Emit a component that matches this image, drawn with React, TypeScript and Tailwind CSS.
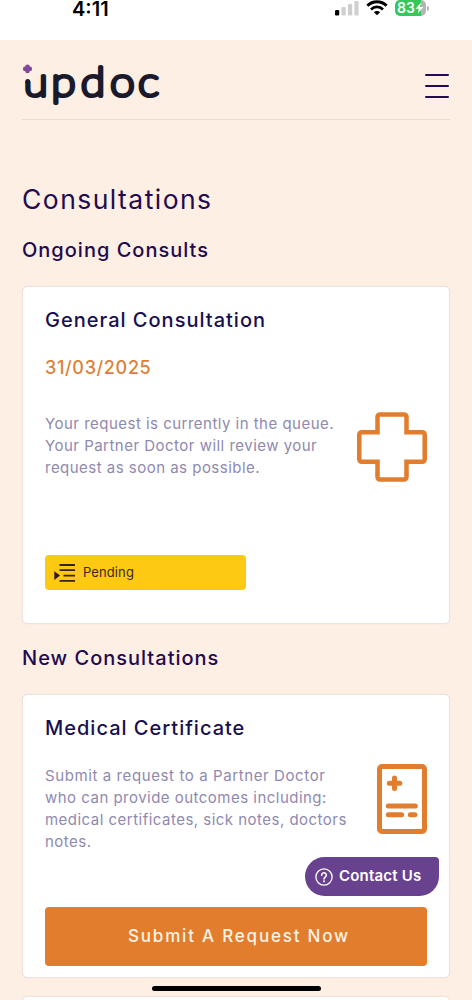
import type { ReactNode } from 'react';
import { clsx } from 'clsx';

function StatusBar() {
  return (
    <div className="relative flex h-10 shrink-0 justify-between bg-white pr-[43px] pl-[72px] text-black">
      <span className="h-[18px] text-[20px] leading-[18px] font-semibold">4:11</span>
      <div className="flex h-4 items-start">
        <svg width="24" height="16" viewBox="0 0 24 16">
          <rect x="0" y="10" width="4.2" height="5.5" rx="1.2" fill="#000" />
          <rect x="6.5" y="7" width="4.2" height="8.5" rx="1.2" fill="#cfcfcf" />
          <rect x="13" y="4" width="4.2" height="11.5" rx="1.2" fill="#cfcfcf" />
          <rect x="19.4" y="1" width="4.2" height="14.5" rx="1.2" fill="#cfcfcf" />
        </svg>
        <svg className="ml-[7px]" width="22" height="16" viewBox="0 0 22 16" fill="none" stroke="#000">
          <path d="M1.4 5.7a13.6 13.6 0 0 1 19.2 0" strokeWidth="3" />
          <path d="M5 9.4a8.5 8.5 0 0 1 12 0" strokeWidth="2.8" />
          <path d="M11 15.3l-3.1-3.1a4.4 4.4 0 0 1 6.2 0z" fill="#000" stroke="none" />
        </svg>
        <div className="relative ml-[7px] flex h-4 w-[31px] items-center overflow-hidden rounded-[5px] bg-[linear-gradient(90deg,#34c759_83%,#b5b5b5_83%)] pl-[2px]">
          <span className="text-[14px] leading-4 font-semibold text-white">83</span>
          <svg width="9" height="12" viewBox="0 0 9 12">
            <path d="M5.8 0.4L0.6 6.7h3.2L2.8 11.6L8.4 5.1H5.1z" fill="#fff" />
          </svg>
        </div>
        <span className="mt-[6px] ml-px h-[5px] w-[2px] rounded-r-full bg-[#b5b5b5]" />
      </div>
    </div>
  );
}

function Logo() {
  return (
    <svg className="block" width="142" height="52" viewBox="0 0 142 52" aria-label="updoc">
      <text
        x="1.5 26.2 52.3 78 102.8"
        y="38"
        transform="scale(1.13 1)"
        className="font-[Lato] text-[39px] font-thin"
        fill="#191a2b"
        stroke="#191a2b"
        strokeWidth="4.2"
        strokeLinejoin="round"
      >
        updoc
      </text>
      {/* the plus sits above a shortened left stem */}
      <rect x="0" y="13" width="10.5" height="10.5" fill="#feefe4" />
      <circle cx="5.7" cy="23.6" r="2.5" fill="#191a2b" />
      <path d="M5.5 8.8v4.2M3.2 10.9h4.6" stroke="#82489a" strokeWidth="4.6" strokeLinecap="round" />
    </svg>
  );
}

function Header() {
  return (
    <header className="mx-[22px] flex h-20 shrink-0 items-start justify-between border-b border-[#eadcd3] pt-[18px]">
      <Logo />
      <button className="mt-[15.5px] mr-px flex w-6 flex-col gap-[9px]" aria-label="Menu">
        <span className="h-[2px] w-6 rounded-full bg-[#220b4f]" />
        <span className="h-[2px] w-6 rounded-full bg-[#220b4f]" />
        <span className="h-[2px] w-6 rounded-full bg-[#220b4f]" />
      </button>
    </header>
  );
}

function Card({ children, className }: { children?: ReactNode; className?: string }) {
  return (
    <section
      className={clsx(
        'shrink-0 rounded-[5px] border border-[#eee2dc] bg-white px-[22px] shadow-[0_0_2px_rgba(0,0,0,0.06)]',
        className
      )}
    >
      {children}
    </section>
  );
}

function CrossIcon() {
  return (
    <svg width="70" height="70" viewBox="0 0 71 71" fill="none" stroke="#e27d2e" strokeWidth="4.6">
      <path d="M23.3 2.5h24.4a2.5 2.5 0 0 1 2.5 2.5v15.5h16a2.5 2.5 0 0 1 2.5 2.5v25a2.5 2.5 0 0 1-2.5 2.5h-16v15.5a2.5 2.5 0 0 1-2.5 2.5h-24.4a2.5 2.5 0 0 1-2.5-2.5v-15.5h-16a2.5 2.5 0 0 1-2.5-2.5v-25a2.5 2.5 0 0 1 2.5-2.5h16v-15.5a2.5 2.5 0 0 1 2.5-2.5z" />
    </svg>
  );
}

function CertificateIcon() {
  return (
    <svg width="50" height="70" viewBox="0 0 50 70" fill="none" stroke="#e27d2e" strokeWidth="5" strokeLinecap="round">
      <rect x="2.5" y="2.5" width="45" height="65" rx="2.5" />
      <path d="M17.5 14v10.5M12.3 19.2h10.5" />
      <path d="M11.3 42h27M11.3 50.7h13.3M33.3 50.7h4.6" />
    </svg>
  );
}

function PendingIcon() {
  return (
    <svg width="22" height="18" viewBox="0 0 22 18" fill="none" stroke="#33241f" strokeWidth="1.8">
      <path d="M5.5 1h15.5M5.5 6.2h15.5M9.5 11.6h11.5M5.5 16.8h15.5" />
      <path d="M0.3 7.3L6 11.6L0.3 16z" fill="#2a1a2a" stroke="none" />
    </svg>
  );
}

function ContactButton() {
  return (
    <button className="absolute top-[857px] left-[305px] flex h-[39px] w-[134px] items-center rounded-[20px] rounded-tr-[4px] bg-[#68428f] pl-[10px] text-white">
      <svg width="18" height="18" viewBox="0 0 18 18" fill="none" stroke="currentColor" strokeWidth="1.3">
        <circle cx="9" cy="9" r="8.1" />
        <path d="M6.7 7.2a2.3 2.3 0 1 1 3.7 1.7c-.9.7-1.4 1-1.4 2" strokeWidth="1.6" strokeLinecap="round" />
        <circle cx="9" cy="13.2" r="1" fill="currentColor" stroke="none" />
      </svg>
      <span className="ml-[6px] text-[15px] font-semibold tracking-[0.2px] whitespace-nowrap">Contact Us</span>
    </button>
  );
}

export default function App() {
  return (
    <div className="relative flex h-[1000px] w-[472px] flex-col overflow-hidden bg-[#feefe4] font-[Inter,sans-serif] text-[#210a50]">
      <StatusBar />
      <Header />
      <main className="flex flex-col px-[22px]">
        <h1 className="mt-[63px] h-8 text-[26.5px] leading-8 tracking-[1.45px] whitespace-nowrap">Consultations</h1>
        <h2 className="mt-[23px] h-6 text-[20px] leading-6 font-medium tracking-[1px] whitespace-nowrap">
          Ongoing Consults
        </h2>

        <Card className="mt-[24px] h-[338px]">
          <h3 className="mt-[21px] h-6 text-[20px] leading-6 font-medium tracking-[1px] whitespace-nowrap text-[#17104f]">
            General Consultation
          </h3>
          <p className="mt-[24px] h-6 text-[18px] leading-6 font-medium tracking-[0.65px] text-[#dc8137]">31/03/2025</p>
          <div className="mt-[32px] flex h-[72px] justify-between">
            <p className="mt-px text-[15px] leading-[22px] tracking-[0.48px] whitespace-nowrap text-[#8f89b0]">
              Your request is currently in the queue.
              <br />
              Your Partner Doctor will review your
              <br />
              request as soon as possible.
            </p>
            <CrossIcon />
          </div>
          <div className="mt-[71px] flex h-[35px] w-[201px] items-center rounded-[4px] bg-[#fdc913] pl-[9px] text-[#3c291c]">
            <PendingIcon />
            <span className="ml-[7px] text-[13px] tracking-[0.1px]">Pending</span>
          </div>
        </Card>

        <h2 className="mt-[22px] h-6 text-[20px] leading-6 font-medium tracking-[1px] whitespace-nowrap">
          New Consultations
        </h2>

        <Card className="mt-[24px] h-[284px]">
          <h3 className="mt-[21px] h-6 text-[20px] leading-6 font-medium tracking-[1px] whitespace-nowrap text-[#17104f]">
            Medical Certificate
          </h3>
          <div className="mt-[24px] flex h-[88px] justify-between">
            <p className="mt-px text-[15px] leading-[22px] tracking-[0.48px] whitespace-nowrap text-[#8f89b0]">
              <span className="tracking-[0.6px]">Submit a request to a Partner Doctor</span>
              <br />
              who can provide outcomes including:
              <br />
              medical certificates, sick notes, doctors
              <br />
              notes.
            </p>
            <CertificateIcon />
          </div>
          <button className="mt-[55px] h-[59px] w-full rounded-[4px] bg-[#e27d2d] pt-px pl-[6px] text-[17px] font-medium tracking-[1.8px] text-[#fff4e4]">
            Submit A Request Now
          </button>
        </Card>

        <Card className="mt-[18px] h-[60px]" />
      </main>

      <ContactButton />
      <div className="absolute top-[986px] left-[152px] h-[5px] w-[169px] rounded-full bg-black" />
    </div>
  );
}
